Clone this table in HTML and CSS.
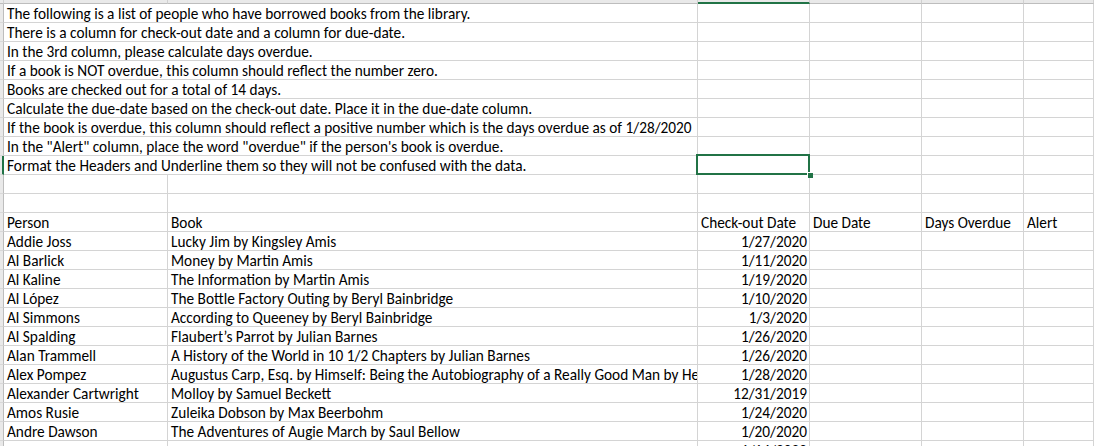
FILE: index.html
```html
<!DOCTYPE html>
<html lang="en">
<head>
<meta charset="utf-8">
<title>Library Overdue Books</title>
<link rel="stylesheet" href="styles.css">
</head>
<body>
<div class="sheet">
  <div class="band corner"></div>
  <div class="band"></div>
  <div class="band"></div>
  <div class="band band-active"></div>
  <div class="band"></div>
  <div class="band"></div>
  <div class="band"></div>
  <div class="band band-end"></div>

  <div class="rh"></div><div class="c wide">The following is a list of people who have borrowed books from the library.</div><div class="c"></div><div class="c"></div><div class="c"></div><div class="c"></div><div class="c end"></div>
  <div class="rh"></div><div class="c wide">There is a column for check-out date and a column for due-date.</div><div class="c"></div><div class="c"></div><div class="c"></div><div class="c"></div><div class="c end"></div>
  <div class="rh"></div><div class="c wide">In the 3rd column, please calculate days overdue.</div><div class="c"></div><div class="c"></div><div class="c"></div><div class="c"></div><div class="c end"></div>
  <div class="rh"></div><div class="c wide">If a book is NOT overdue, this column should reflect the number zero.</div><div class="c"></div><div class="c"></div><div class="c"></div><div class="c"></div><div class="c end"></div>
  <div class="rh"></div><div class="c wide">Books are checked out for a total of 14 days.</div><div class="c"></div><div class="c"></div><div class="c"></div><div class="c"></div><div class="c end"></div>
  <div class="rh"></div><div class="c wide">Calculate the due-date based on the check-out date. Place it in the due-date column.</div><div class="c"></div><div class="c"></div><div class="c"></div><div class="c"></div><div class="c end"></div>
  <div class="rh"></div><div class="c wide">If the book is overdue, this column should reflect a positive number which is the days overdue as of 1/28/2020</div><div class="c"></div><div class="c"></div><div class="c"></div><div class="c"></div><div class="c end"></div>
  <div class="rh"></div><div class="c wide">In the "Alert" column, place the word "overdue" if the person's book is overdue.</div><div class="c"></div><div class="c"></div><div class="c"></div><div class="c"></div><div class="c end"></div>
  <div class="rh rh-active"></div><div class="c wide">Format the Headers and Underline them so they will not be confused with the data.</div><div class="c sel"></div><div class="c"></div><div class="c"></div><div class="c"></div><div class="c end"></div>

  <div class="rh"></div><div class="c"></div><div class="c"></div><div class="c"></div><div class="c"></div><div class="c"></div><div class="c"></div><div class="c end"></div>
  <div class="rh"></div><div class="c"></div><div class="c"></div><div class="c"></div><div class="c"></div><div class="c"></div><div class="c"></div><div class="c end"></div>

  <div class="rh"></div><div class="c">Person</div><div class="c">Book</div><div class="c">Check-out Date</div><div class="c">Due Date</div><div class="c">Days Overdue</div><div class="c">Alert</div><div class="c end"></div>

  <div class="rh"></div><div class="c">Addie Joss</div><div class="c">Lucky Jim by Kingsley Amis</div><div class="c num">1/27/2020</div><div class="c"></div><div class="c"></div><div class="c"></div><div class="c end"></div>
  <div class="rh"></div><div class="c">Al Barlick</div><div class="c">Money by Martin Amis</div><div class="c num">1/11/2020</div><div class="c"></div><div class="c"></div><div class="c"></div><div class="c end"></div>
  <div class="rh"></div><div class="c">Al Kaline</div><div class="c">The Information by Martin Amis</div><div class="c num">1/19/2020</div><div class="c"></div><div class="c"></div><div class="c"></div><div class="c end"></div>
  <div class="rh"></div><div class="c">Al López</div><div class="c">The Bottle Factory Outing by Beryl Bainbridge</div><div class="c num">1/10/2020</div><div class="c"></div><div class="c"></div><div class="c"></div><div class="c end"></div>
  <div class="rh"></div><div class="c">Al Simmons</div><div class="c">According to Queeney by Beryl Bainbridge</div><div class="c num">1/3/2020</div><div class="c"></div><div class="c"></div><div class="c"></div><div class="c end"></div>
  <div class="rh"></div><div class="c">Al Spalding</div><div class="c">Flaubert’s Parrot by Julian Barnes</div><div class="c num">1/26/2020</div><div class="c"></div><div class="c"></div><div class="c"></div><div class="c end"></div>
  <div class="rh"></div><div class="c">Alan Trammell</div><div class="c">A History of the World in 10 1/2 Chapters by Julian Barnes</div><div class="c num">1/26/2020</div><div class="c"></div><div class="c"></div><div class="c"></div><div class="c end"></div>
  <div class="rh"></div><div class="c">Alex Pompez</div><div class="c">Augustus Carp, Esq. by Himself: Being the Autobiography of a Really Good Man by Henry Howarth Bashford</div><div class="c num">1/28/2020</div><div class="c"></div><div class="c"></div><div class="c"></div><div class="c end"></div>
  <div class="rh"></div><div class="c">Alexander Cartwright</div><div class="c">Molloy by Samuel Beckett</div><div class="c num">12/31/2019</div><div class="c"></div><div class="c"></div><div class="c"></div><div class="c end"></div>
  <div class="rh"></div><div class="c">Amos Rusie</div><div class="c">Zuleika Dobson by Max Beerbohm</div><div class="c num">1/24/2020</div><div class="c"></div><div class="c"></div><div class="c"></div><div class="c end"></div>
  <div class="rh"></div><div class="c">Andre Dawson</div><div class="c">The Adventures of Augie March by Saul Bellow</div><div class="c num">1/20/2020</div><div class="c"></div><div class="c"></div><div class="c"></div><div class="c end"></div>
  <div class="rh"></div><div class="c"></div><div class="c"></div><div class="c num">1/14/2020</div><div class="c"></div><div class="c"></div><div class="c"></div><div class="c end"></div>
</div>
</body>
</html>
```

FILE: styles.css
```css
html, body {
  margin: 0;
  padding: 0;
  background: #ffffff;
  overflow: hidden;
}

.sheet {
  display: grid;
  grid-template-columns: 4px 164px 530px 112px 112px 102px 70px 1fr;
  grid-template-rows: 4px;
  grid-auto-rows: 19px;
  width: 1094px;
  height: 446px;
  overflow: hidden;
  font-family: Calibri, Carlito, Lato, "Liberation Sans", sans-serif;
  font-size: 15.3px;
  color: #000000;
}

.band {
  box-sizing: border-box;
  background: #e9e9e9;
  border-bottom: 1px solid #bdbdbd;
  border-right: 1px solid #d0d0d0;
}

.band-end {
  border-right: none;
}

.band-active {
  border-bottom: 2px solid #217346;
}

.rh {
  box-sizing: border-box;
  background: #e9e9e9;
  border-right: 1px solid #bdbdbd;
  border-bottom: 1px solid #d8d8d8;
}

.rh-active {
  border-right: 2px solid #217346;
}

.c {
  box-sizing: border-box;
  position: relative;
  border-right: 1px solid #d4d4d4;
  border-bottom: 1px solid #d4d4d4;
  padding: 1px 3px 0 3px;
  line-height: 18px;
  white-space: nowrap;
  overflow: hidden;
}

.wide {
  grid-column: span 2;
}

.num {
  text-align: right;
  padding-right: 2px;
}

.end {
  border-right: none;
}

.sel {
  overflow: visible;
  z-index: 2;
}

.sel::before {
  content: "";
  position: absolute;
  left: -2px;
  top: -2px;
  right: -1px;
  bottom: -1px;
  border: 2px solid #217346;
}

.sel::after {
  content: "";
  position: absolute;
  right: -4px;
  bottom: -4px;
  width: 5px;
  height: 5px;
  background: #217346;
  border-left: 1px solid #ffffff;
  border-top: 1px solid #ffffff;
}
```
